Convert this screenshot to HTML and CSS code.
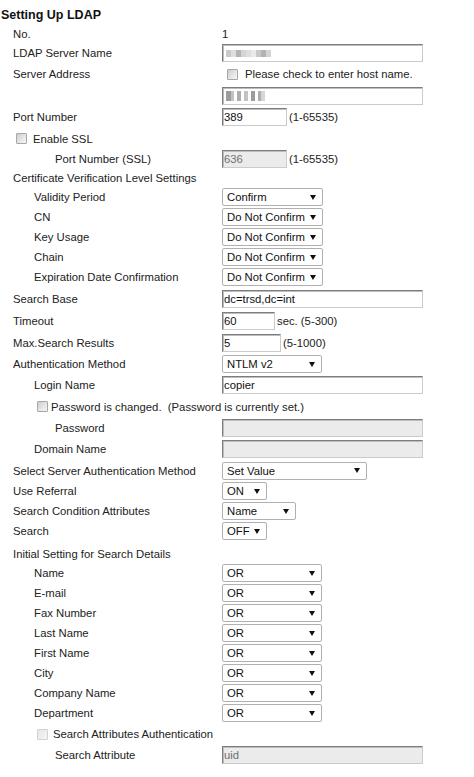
FILE: index.html
```html
<!DOCTYPE html>
<html>
<head>
<meta charset="utf-8">
<title>Setting Up LDAP</title>
<link rel="stylesheet" href="styles.css">
</head>
<body>
<div class="page">
  <h1 class="title">Setting Up LDAP</h1>

  <div class="row h18"><div class="lbl l0">No.</div><div class="val">1</div></div>
  <div class="row h20"><div class="lbl l0">LDAP Server Name</div>
    <div class="val"><div class="inp w201"><span class="blur b1"><i class="g1"></i><i class="g2"></i><i class="g3"></i><i class="g4"></i><i class="g2"></i><i class="g5"></i><i class="g1"></i><i class="g3"></i><i class="g4"></i></span></div></div></div>
  <div class="row h22"><div class="lbl l0">Server Address</div>
    <div class="val"><div class="cbline srv"><span class="cb"></span><span>Please check to enter host name.</span></div></div></div>
  <div class="row h21"><div class="lbl"></div>
    <div class="val"><div class="inp w201"><span class="blur b2"><i class="d1 wa"></i><i class="d2 wb"></i><i class="gap"></i><i class="d3 wc"></i><i class="gap"></i><i class="d2 wc"></i><i class="gap"></i><i class="d1 wc"></i><i class="gap"></i><i class="d3 wb"></i><i class="d4 wc"></i></span></div></div></div>
  <div class="row h22"><div class="lbl l0">Port Number</div>
    <div class="val"><div class="inp w65">389</div><span>(1-65535)</span></div></div>

  <div class="line h21"><div class="cbline ssl"><span class="cb"></span><span>Enable SSL</span></div></div>
  <div class="row h19"><div class="lbl l2">Port Number (SSL)</div>
    <div class="val"><div class="inp w65 dis">636</div><span>(1-65535)</span></div></div>

  <div class="row h19"><div class="lbl l0">Certificate Verification Level Settings</div><div class="val"></div></div>
  <div class="row h20"><div class="lbl l1">Validity Period</div><div class="val"><div class="sel w101"><span>Confirm</span><svg class="tri" viewBox="0 0 6 5"><polygon points="0,0 6,0 3,5"/></svg></div></div></div>
  <div class="row h20"><div class="lbl l1">CN</div><div class="val"><div class="sel w101"><span>Do Not Confirm</span><svg class="tri" viewBox="0 0 6 5"><polygon points="0,0 6,0 3,5"/></svg></div></div></div>
  <div class="row h20"><div class="lbl l1">Key Usage</div><div class="val"><div class="sel w101"><span>Do Not Confirm</span><svg class="tri" viewBox="0 0 6 5"><polygon points="0,0 6,0 3,5"/></svg></div></div></div>
  <div class="row h20"><div class="lbl l1">Chain</div><div class="val"><div class="sel w101"><span>Do Not Confirm</span><svg class="tri" viewBox="0 0 6 5"><polygon points="0,0 6,0 3,5"/></svg></div></div></div>
  <div class="row h20"><div class="lbl l1">Expiration Date Confirmation</div><div class="val"><div class="sel w101"><span>Do Not Confirm</span><svg class="tri" viewBox="0 0 6 5"><polygon points="0,0 6,0 3,5"/></svg></div></div></div>

  <div class="row h23"><div class="lbl l0">Search Base</div><div class="val"><div class="inp w201">dc=trsd,dc=int</div></div></div>
  <div class="row h22"><div class="lbl l0">Timeout</div><div class="val"><div class="inp w53">60</div><span>sec. (5-300)</span></div></div>
  <div class="row h22"><div class="lbl l0">Max.Search Results</div><div class="val"><div class="inp w59">5</div><span>(5-1000)</span></div></div>
  <div class="row h20"><div class="lbl l0">Authentication Method</div><div class="val"><div class="sel w100"><span>NTLM v2</span><svg class="tri" viewBox="0 0 6 5"><polygon points="0,0 6,0 3,5"/></svg></div></div></div>
  <div class="row h22"><div class="lbl l1">Login Name</div><div class="val"><div class="inp w201">copier</div></div></div>
  <div class="line h21"><div class="cbline pw"><span class="cb"></span><span>Password is changed.&nbsp; (Password is currently set.)</span></div></div>
  <div class="row h21"><div class="lbl l2">Password</div><div class="val"><div class="inp w201 dis"></div></div></div>
  <div class="row h22"><div class="lbl l1">Domain Name</div><div class="val"><div class="inp w201 dis"></div></div></div>

  <div class="row h21"><div class="lbl l0">Select Server Authentication Method</div><div class="val"><div class="sel w145"><span>Set Value</span><svg class="tri" viewBox="0 0 6 5"><polygon points="0,0 6,0 3,5"/></svg></div></div></div>
  <div class="row h20"><div class="lbl l0">Use Referral</div><div class="val"><div class="sel w45"><span>ON</span><svg class="tri" viewBox="0 0 6 5"><polygon points="0,0 6,0 3,5"/></svg></div></div></div>
  <div class="row h20"><div class="lbl l0">Search Condition Attributes</div><div class="val"><div class="sel w74"><span>Name</span><svg class="tri" viewBox="0 0 6 5"><polygon points="0,0 6,0 3,5"/></svg></div></div></div>
  <div class="row h20"><div class="lbl l0">Search</div><div class="val"><div class="sel w45"><span>OFF</span><svg class="tri" viewBox="0 0 6 5"><polygon points="0,0 6,0 3,5"/></svg></div></div></div>

  <div class="row h22 padtop"><div class="lbl l0">Initial Setting for Search Details</div><div class="val"></div></div>
  <div class="row h20"><div class="lbl l1">Name</div><div class="val"><div class="sel w100"><span>OR</span><svg class="tri" viewBox="0 0 6 5"><polygon points="0,0 6,0 3,5"/></svg></div></div></div>
  <div class="row h20"><div class="lbl l1">E-mail</div><div class="val"><div class="sel w100"><span>OR</span><svg class="tri" viewBox="0 0 6 5"><polygon points="0,0 6,0 3,5"/></svg></div></div></div>
  <div class="row h20"><div class="lbl l1">Fax Number</div><div class="val"><div class="sel w100"><span>OR</span><svg class="tri" viewBox="0 0 6 5"><polygon points="0,0 6,0 3,5"/></svg></div></div></div>
  <div class="row h20"><div class="lbl l1">Last Name</div><div class="val"><div class="sel w100"><span>OR</span><svg class="tri" viewBox="0 0 6 5"><polygon points="0,0 6,0 3,5"/></svg></div></div></div>
  <div class="row h20"><div class="lbl l1">First Name</div><div class="val"><div class="sel w100"><span>OR</span><svg class="tri" viewBox="0 0 6 5"><polygon points="0,0 6,0 3,5"/></svg></div></div></div>
  <div class="row h20"><div class="lbl l1">City</div><div class="val"><div class="sel w100"><span>OR</span><svg class="tri" viewBox="0 0 6 5"><polygon points="0,0 6,0 3,5"/></svg></div></div></div>
  <div class="row h20"><div class="lbl l1">Company Name</div><div class="val"><div class="sel w100"><span>OR</span><svg class="tri" viewBox="0 0 6 5"><polygon points="0,0 6,0 3,5"/></svg></div></div></div>
  <div class="row h20"><div class="lbl l1">Department</div><div class="val"><div class="sel w100"><span>OR</span><svg class="tri" viewBox="0 0 6 5"><polygon points="0,0 6,0 3,5"/></svg></div></div></div>

  <div class="line h22"><div class="cbline saa"><span class="cb off"></span><span>Search Attributes Authentication</span></div></div>
  <div class="row h20"><div class="lbl l2">Search Attribute</div><div class="val"><div class="inp w201 dis">uid</div></div></div>
</div>
</body>
</html>
```

FILE: styles.css
```css
* { box-sizing: border-box; }
body {
  margin: 0;
  background: #fff;
  font-family: "Liberation Sans", Arial, sans-serif;
  font-size: 11.3px;
  color: #222;
}
.page { padding-top: 5px; }
.title {
  margin: 0;
  height: 20px;
  line-height: 20px;
  padding-left: 1px;
  font-size: 12.5px;
  font-weight: bold;
  color: #111;
}
.row {
  display: grid;
  grid-template-columns: 222px 1fr;
  align-items: center;
}
.line { display: flex; align-items: center; }
.h18 { height: 18px; }
.h19 { height: 19px; }
.h20 { height: 20px; }
.h21 { height: 21px; }
.h22 { height: 22px; }
.h23 { height: 23px; }
.padtop { padding-top: 3px; }
.lbl { white-space: nowrap; }
.l0 { padding-left: 13px; }
.l1 { padding-left: 34px; }
.l2 { padding-left: 55px; }
.val {
  display: flex;
  align-items: center;
  gap: 2px;
  white-space: nowrap;
}
.inp {
  height: 18px;
  border: 1px solid;
  border-color: #7d7d7d #cbcbcb #cbcbcb #7d7d7d;
  box-shadow: inset 1px 1px 0 #bdbdbd;
  background: #fff;
  padding: 0 1px;
  display: flex;
  align-items: center;
  color: #111;
  overflow: hidden;
}
.dis { background: #ebebeb; color: #707070; }
.w201 { width: 201px; }
.w65 { width: 65px; }
.w53 { width: 53px; }
.w59 { width: 59px; }
.sel {
  height: 18px;
  border: 1px solid #b0b0b0;
  border-radius: 2px;
  background: #fff;
  display: flex;
  align-items: center;
  justify-content: space-between;
  padding: 0 6px 0 4px;
  color: #111;
}
.w101 { width: 101px; }
.w100 { width: 100px; }
.w145 { width: 145px; }
.w45 { width: 45px; }
.w74 { width: 74px; }
.tri { width: 6px; height: 5px; flex: none; }
.tri polygon { fill: #111; }

.cbline { display: flex; align-items: center; white-space: nowrap; }
.cb {
  width: 11px;
  height: 11px;
  flex: none;
  border: 1px solid #a7a7a7;
  border-radius: 1px;
  background: linear-gradient(135deg, #cdcdcd 0%, #e6e6e6 55%, #f6f6f6 100%);
}
.cb.off {
  border-color: #d2d2d2;
  background: linear-gradient(135deg, #e6e6e6, #f5f5f5);
}
.srv { padding-left: 5px; gap: 7px; }
.ssl { padding-left: 16px; gap: 6px; }
.pw { padding-left: 37px; gap: 3px; }
.saa { padding-left: 37px; gap: 5px; }

.blur { display: flex; align-items: center; padding-left: 2px; }
.blur i { display: block; }
.b1 i { width: 5px; height: 7px; }
.g1 { background: #c9c9c9; }
.g2 { background: #dedede; }
.g3 { background: #b3b3b3; }
.g4 { background: #d4d4d4; }
.g5 { background: #eaeaea; }
.b2 i { height: 10px; }
.wa { width: 5px; }
.wb { width: 3px; }
.wc { width: 4px; }
.gap { width: 3px; background: transparent; }
.d1 { background: #9c9c9c; }
.d2 { background: #c2c2c2; }
.d3 { background: #adadad; }
.d4 { background: #d6d6d6; }
```
